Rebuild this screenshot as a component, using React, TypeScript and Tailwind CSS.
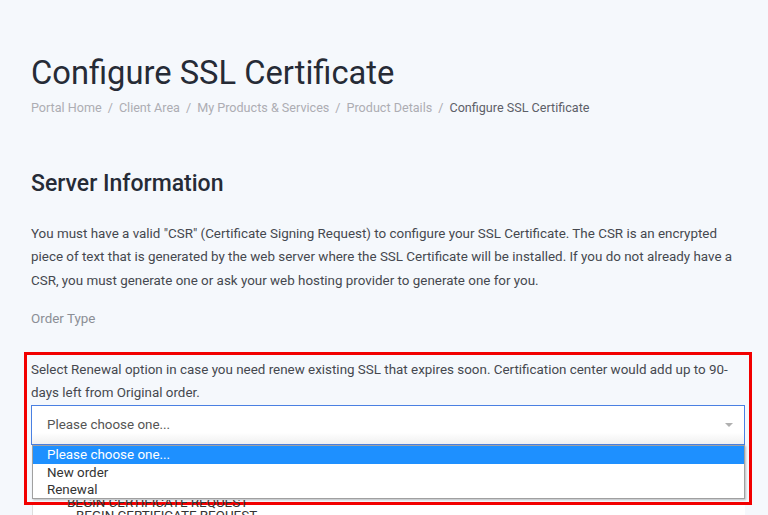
const App = () => {
  return (
    <div
      className="h-[515px] overflow-hidden bg-[#f5f8fc] pl-[31px] pr-[23px] pt-[55px] text-[#444]"
      style={{ fontFamily: "Roboto, 'Liberation Sans', sans-serif" }}
    >
      <h1 className="text-[32.7px] leading-[36px] font-normal text-[#262b36]">
        Configure SSL Certificate
      </h1>
      <div className="mt-[7px] flex items-center text-[12.6px] leading-[20px] text-[#adadb3]">
        <span>Portal Home</span>
        <span className="px-[6px]">/</span>
        <span>Client Area</span>
        <span className="px-[6px]">/</span>
        <span>My Products &amp; Services</span>
        <span className="px-[6px]">/</span>
        <span>Product Details</span>
        <span className="px-[6px]">/</span>
        <span className="text-[#5d6068]">Configure SSL Certificate</span>
      </div>

      <h2 className="mt-[52px] text-[23px] leading-[28px] font-medium text-[#262b36]">
        Server Information
      </h2>
      <p className="mt-[23.5px] text-[13.4px] leading-[23.5px] text-[#45484f]">
        You must have a valid "CSR" (Certificate Signing Request) to configure your SSL
        Certificate. The CSR is an encrypted piece of text that is generated by the web server
        where the SSL Certificate will be installed. If you do not already have a CSR, you must
        generate one or ask your web hosting provider to generate one for you.
      </p>
      <p className="mt-[14.5px] text-[13.4px] leading-[23.5px] text-[#8b8e95]">Order Type</p>

      <div className="relative z-0 mt-[22px] -ml-[7px] -mr-[7px] border-[3px] border-[#f20000] pl-[4px] pr-[4px] pt-[2.5px] pb-[3px]">
        <p className="text-[13.4px] leading-[23px] text-[#45484f]">
          Select Renewal option in case you need renew existing SSL that expires soon.
          Certification center would add up to 90-days left from Original order.
        </p>
        <div className="mt-[1.5px] h-[40px] bg-gradient-to-b from-white from-70% to-[#f0f0f0] border border-[#4a80e2] flex items-center justify-between pl-[15px] pr-[11px] text-[13.4px] text-[#555]">
          <span>Please choose one...</span>
          <span className="w-0 h-0 border-l-[4px] border-r-[4px] border-t-[4px] border-l-transparent border-r-transparent border-t-[#b0b0b0]"></span>
        </div>
        <div className="ml-[1px] h-[54px] bg-white border border-[#a0a0a0] shadow-[1px_1px_2px_rgba(0,0,0,0.25)] text-[13.4px] text-[#333]">
          <div className="bg-[#1e90ff] text-white pl-[14px] h-[18px] leading-[18px]">
            Please choose one...
          </div>
          <div className="pl-[14px] h-[17px] leading-[17px]">New order</div>
          <div className="pl-[14px] h-[17px] leading-[17px]">Renewal</div>
        </div>
      </div>

      <div className="relative ml-[1px] h-[40px] bg-white border-l border-[#ddd]">
        <div className="absolute -top-[5px] left-[34px] z-10 h-[9px] overflow-hidden flex items-end text-[13.4px] text-[#333]">
          <span className="leading-[12px]">BEGIN CERTIFICATE REQUEST</span>
        </div>
        <div className="absolute top-[4px] left-[43px] text-[13.4px] leading-[14px] text-[#333]">
          BEGIN CERTIFICATE REQUEST
        </div>
      </div>
    </div>
  );
};

export default App;
